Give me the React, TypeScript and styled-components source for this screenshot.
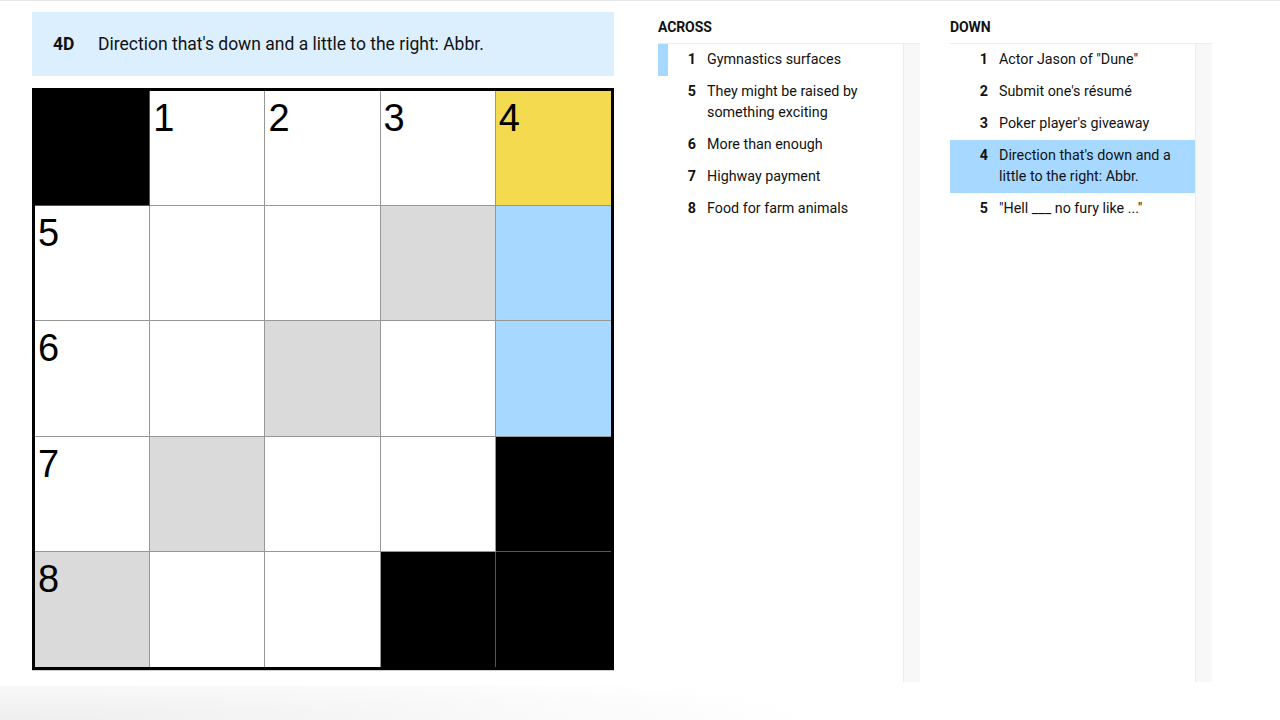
import * as React from 'react'
import styled, { createGlobalStyle } from 'styled-components'

const GlobalStyle = createGlobalStyle`
  html, body {
    margin: 0;
    padding: 0;
    background: #ffffff;
  }
  body {
    font-family: 'Liberation Sans', Arial, sans-serif;
    color: #121212;
  }
`

type CellKind = 'black' | 'white' | 'gray' | 'yellow' | 'blue'

const cellColors: Record<CellKind, string> = {
  black: '#000000',
  white: '#ffffff',
  gray: '#dadada',
  yellow: '#f3da4e',
  blue: '#a7d8ff',
}

const grid: { kind: CellKind; num?: number }[][] = [
  [{ kind: 'black' }, { kind: 'white', num: 1 }, { kind: 'white', num: 2 }, { kind: 'white', num: 3 }, { kind: 'yellow', num: 4 }],
  [{ kind: 'white', num: 5 }, { kind: 'white' }, { kind: 'white' }, { kind: 'gray' }, { kind: 'blue' }],
  [{ kind: 'white', num: 6 }, { kind: 'white' }, { kind: 'gray' }, { kind: 'white' }, { kind: 'blue' }],
  [{ kind: 'white', num: 7 }, { kind: 'gray' }, { kind: 'white' }, { kind: 'white' }, { kind: 'black' }],
  [{ kind: 'gray', num: 8 }, { kind: 'white' }, { kind: 'white' }, { kind: 'black' }, { kind: 'black' }],
]

const across = [
  { num: 1, text: 'Gymnastics surfaces', related: true },
  { num: 5, text: 'They might be raised by something exciting' },
  { num: 6, text: 'More than enough' },
  { num: 7, text: 'Highway payment' },
  { num: 8, text: 'Food for farm animals' },
]

const down = [
  { num: 1, text: 'Actor Jason of "Dune"' },
  { num: 2, text: "Submit one's résumé" },
  { num: 3, text: "Poker player's giveaway" },
  { num: 4, text: "Direction that's down and a little to the right: Abbr.", selected: true },
  { num: 5, text: '"Hell ___ no fury like ..."' },
]

const Page = styled.div`
  position: relative;
  height: 720px;
  border-top: 1px solid #e6e6e6;
  box-sizing: border-box;
  overflow: hidden;
`

const Layout = styled.div`
  display: flex;
  padding: 11px 0 0 32px;
`

const Board = styled.div`
  display: flex;
  flex-direction: column;
  gap: 12px;
  width: 582px;
`

const ClueBar = styled.div`
  display: flex;
  align-items: center;
  height: 64px;
  padding: 0 21px;
  background: #dcefff;
  font-family: 'Roboto', 'Liberation Sans', sans-serif;
  font-size: 17.5px;
`

const ClueBarLabel = styled.span`
  width: 45px;
  font-weight: 700;
`

const Grid = styled.div`
  display: grid;
  grid-template-columns: repeat(5, 1fr);
  grid-template-rows: repeat(5, 1fr);
  width: 582px;
  height: 582px;
  box-sizing: border-box;
  border: 3px solid #000;
  box-shadow: 0 1px 0 #cfcfcf;
`

const Cell = styled.div<{ $kind: CellKind; $lastCol: boolean; $lastRow: boolean }>`
  background: ${({ $kind }) => cellColors[$kind]};
  border-right: ${({ $lastCol, $kind }) =>
    $lastCol ? 'none' : `1px solid ${$kind === 'black' ? '#555' : '#979797'}`};
  border-bottom: ${({ $lastRow, $kind }) =>
    $lastRow ? 'none' : `1px solid ${$kind === 'black' ? '#555' : '#979797'}`};
`

const CellNumber = styled.span`
  display: block;
  padding: 8px 0 0 3px;
  font-family: 'Liberation Sans', Arial, sans-serif;
  font-size: 38px;
  line-height: 1;
  color: #000;
`

const Lists = styled.div`
  display: flex;
  gap: 30px;
  margin-left: 44px;
`

const ListSection = styled.section`
  display: flex;
  flex-direction: column;
  width: 262px;
`

const ListTitle = styled.h3`
  margin: 5px 0 6px;
  font-family: 'Roboto', 'Liberation Sans', sans-serif;
  font-size: 14px;
  line-height: 20px;
  font-weight: 700;
  text-transform: uppercase;
  letter-spacing: -0.1px;
`

const ListBody = styled.div`
  display: flex;
  height: 638px;
  border-top: 1px solid #ececec;
`

const ClueList = styled.ol`
  flex: 1;
  margin: 0;
  padding: 0;
  list-style: none;
`

const Scrollbar = styled.div`
  width: 16px;
  background: #f8f8f8;
  border-left: 1px solid #ececec;
`

const ClueItem = styled.li<{ $selected?: boolean; $related?: boolean }>`
  display: flex;
  padding: 5px 8px 6px 0;
  background: ${({ $selected }) => ($selected ? '#a7d8ff' : 'transparent')};
  border-left: 10px solid ${({ $related }) => ($related ? '#a7d8ff' : 'transparent')};
  font-family: 'Roboto', 'Liberation Sans', sans-serif;
  font-size: 14.3px;
  line-height: 21px;
`

const ClueNum = styled.span`
  flex: 0 0 28px;
  text-align: right;
  font-weight: 700;
  margin-right: 11px;
`

const ClueText = styled.span`
  flex: 1;
`

const BottomShade = styled.div`
  position: absolute;
  left: 0;
  right: 0;
  bottom: 0;
  height: 34px;
  background: radial-gradient(ellipse 820px 60px at 0 100%, #eeeeee 0%, #f6f6f6 45%, rgba(255, 255, 255, 0) 100%);
  pointer-events: none;
`

const ClueColumn = ({
  title,
  clues,
}: {
  title: string
  clues: { num: number; text: string; selected?: boolean; related?: boolean }[]
}) => (
  <ListSection>
    <ListTitle>{title}</ListTitle>
    <ListBody>
      <ClueList>
        {clues.map(c => (
          <ClueItem key={c.num} $selected={c.selected} $related={c.related}>
            <ClueNum>{c.num}</ClueNum>
            <ClueText>{c.text}</ClueText>
          </ClueItem>
        ))}
      </ClueList>
      <Scrollbar />
    </ListBody>
  </ListSection>
)

export default function App() {
  return (
    <Page>
      <GlobalStyle />
      <Layout>
        <Board>
          <ClueBar>
            <ClueBarLabel>4D</ClueBarLabel>
            <span>Direction that's down and a little to the right: Abbr.</span>
          </ClueBar>
          <Grid>
            {grid.map((row, r) =>
              row.map((cell, c) => (
                <Cell key={`${r}-${c}`} $kind={cell.kind} $lastCol={c === 4} $lastRow={r === 4}>
                  {cell.num !== undefined && <CellNumber>{cell.num}</CellNumber>}
                </Cell>
              ))
            )}
          </Grid>
        </Board>
        <Lists>
          <ClueColumn title="Across" clues={across} />
          <ClueColumn title="Down" clues={down} />
        </Lists>
      </Layout>
      <BottomShade />
    </Page>
  )
}
